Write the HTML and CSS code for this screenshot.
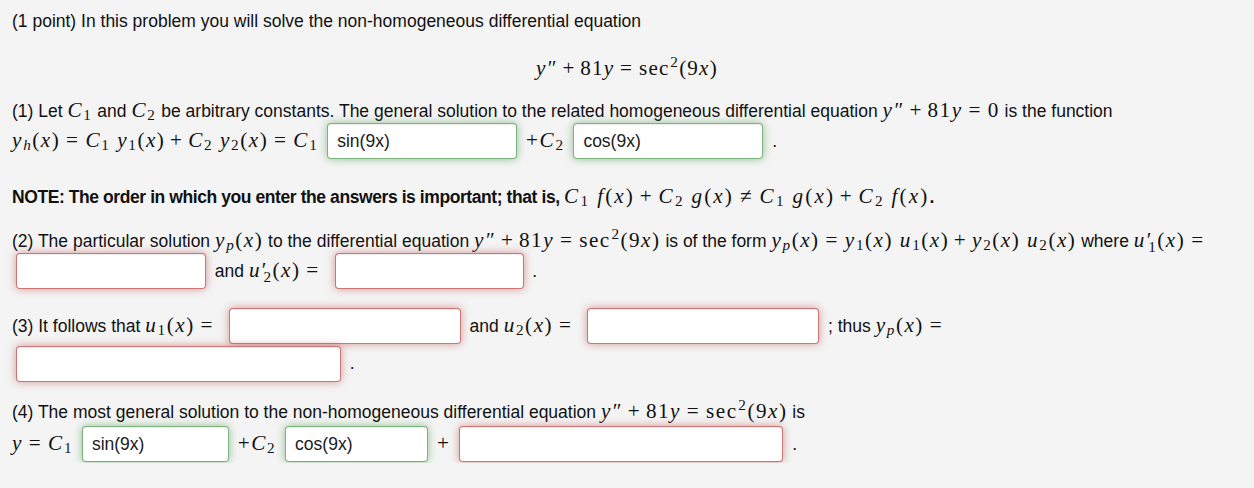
FILE: index.html
```html
<!DOCTYPE html>
<html>
<head>
<meta charset="utf-8">
<title>Differential equation</title>
<link rel="stylesheet" href="styles.css">
</head>
<body>
<div class="page">
  <p class="intro">(1 point) In this problem you will solve the non-homogeneous differential equation</p>
  <div class="display"><span class="k"><i>y</i><span class="pr">″</span><span class="bin">+</span>81<i>y</i><span class="rel">=</span>sec<sup>2</sup>(9<i>x</i>)</span></div>

  <div class="part p1">
    <div class="line">(1) Let <span class="k"><i>C</i><sub>1</sub></span> and <span class="k"><i>C</i><sub>2</sub></span> be arbitrary constants. The general solution to the related homogeneous differential equation <span class="k"><i>y</i><span class="pr">″</span><span class="bin">+</span>81<i>y</i><span class="rel">=</span>0</span> is the function</div>
    <div class="row"><span class="k"><i>y</i><sub><i>h</i></sub>(<i>x</i>)<span class="rel">=</span><i>C</i><sub>1</sub><span class="sp"></span><i>y</i><sub>1</sub>(<i>x</i>)<span class="bin">+</span><i>C</i><sub>2</sub><span class="sp"></span><i>y</i><sub>2</sub>(<i>x</i>)<span class="rel">=</span><i>C</i><sub>1</sub></span> <input class="ans correct w190" type="text" value="sin(9x)"> <span class="k">+<i>C</i><sub>2</sub></span> <input class="ans correct w190" type="text" value="cos(9x)"> .</div>
  </div>

  <p class="note">NOTE: The order in which you enter the answers is important; that is, <span class="k"><i>C</i><sub>1</sub><span class="sp"></span><i>f</i>(<i>x</i>)<span class="bin">+</span><i>C</i><sub>2</sub><span class="sp"></span><i>g</i>(<i>x</i>)<span class="rel">≠</span><i>C</i><sub>1</sub><span class="sp"></span><i>g</i>(<i>x</i>)<span class="bin">+</span><i>C</i><sub>2</sub><span class="sp"></span><i>f</i>(<i>x</i>)</span>.</p>

  <div class="part p2">
    <div class="line">(2) The particular solution <span class="k"><i>y</i><sub><i>p</i></sub>(<i>x</i>)</span> to the differential equation <span class="k"><i>y</i><span class="pr">″</span><span class="bin">+</span>81<i>y</i><span class="rel">=</span>sec<sup>2</sup>(9<i>x</i>)</span> is of the form <span class="k"><i>y</i><sub><i>p</i></sub>(<i>x</i>)<span class="rel">=</span><i>y</i><sub>1</sub>(<i>x</i>)<span class="sp"></span><i>u</i><sub>1</sub>(<i>x</i>)<span class="bin">+</span><i>y</i><sub>2</sub>(<i>x</i>)<span class="sp"></span><i>u</i><sub>2</sub>(<i>x</i>)</span> where <span class="k"><i>u</i><span class="pr1">′</span><sub class="under">1</sub>(<i>x</i>)<span class="rel">=</span></span></div>
    <div class="row"><input class="ans incorrect w190" type="text"> and <span class="k"><i>u</i><span class="pr1">′</span><sub class="under">2</sub>(<i>x</i>)<span class="rel">=</span></span> <input class="ans incorrect w189" type="text"> .</div>
  </div>

  <div class="part p3">
    <div class="row">(3) It follows that <span class="k"><i>u</i><sub>1</sub>(<i>x</i>)<span class="rel">=</span></span> <input class="ans incorrect w232" type="text"> and <span class="k"><i>u</i><sub>2</sub>(<i>x</i>)<span class="rel">=</span></span> <input class="ans incorrect w232" type="text"> ; thus <span class="k"><i>y</i><sub><i>p</i></sub>(<i>x</i>)<span class="rel">=</span></span></div>
    <div class="row"><input class="ans incorrect w325" type="text"> .</div>
  </div>

  <div class="part p4">
    <div class="line">(4) The most general solution to the non-homogeneous differential equation <span class="k"><i>y</i><span class="pr">″</span><span class="bin">+</span>81<i>y</i><span class="rel">=</span>sec<sup>2</sup>(9<i>x</i>)</span> is</div>
    <div class="row"><span class="k"><i>y</i><span class="rel">=</span><i>C</i><sub>1</sub></span> <input class="ans correct w147" type="text" value="sin(9x)"> <span class="k">+<i>C</i><sub>2</sub></span> <input class="ans correct w143" type="text" value="cos(9x)"> <span class="k">+</span> <input class="ans incorrect w324" type="text"> .</div>
  </div>
</div>
</body>
</html>
```

FILE: styles.css
```css
html, body {
  margin: 0;
  padding: 0;
}
body {
  background: #f4f4f4;
  font-family: "Liberation Sans", Arial, sans-serif;
  font-size: 17.5px;
  color: #111;
}
.page {
  padding: 9px 12px 0 12px;
}
p {
  margin: 0;
}
.intro {
  line-height: 24px;
}
.display {
  text-align: center;
  margin-top: 15px;
  height: 40px;
  line-height: 40px;
}
.display .k {
  letter-spacing: 0.055em;
}
.part {
  margin-top: 10px;
}
.note {
  margin-top: 24px;
  line-height: 24px;
  height: 24px;
  font-weight: bold;
  letter-spacing: -0.42px;
  white-space: nowrap;
}
.note .k {
  font-weight: normal;
  letter-spacing: 0.1em;
}
.p2 {
  margin-top: 20px;
}
.p3 {
  margin-top: 17px;
}
.p4 {
  margin-top: 16px;
}
.p4 .row {
  margin-top: 2px;
}
.line {
  line-height: 24px;
  height: 24px;
  white-space: nowrap;
}
.row {
  line-height: 36px;
  height: 38px;
  white-space: nowrap;
}
.ans {
  box-sizing: border-box;
  height: 36px;
  vertical-align: top;
  margin: 1px 4px;
  border-radius: 4px;
  background: #fff;
  font: 17.5px "Liberation Sans", Arial, sans-serif;
  padding: 0 9px;
  color: #1a1a1a;
  border: 1px solid;
  outline: none;
}
.correct {
  border-color: rgba(81, 153, 81, 0.75);
  box-shadow: inset 0 1px 1px rgba(0, 0, 0, 0.075), 0 0 8px rgba(81, 153, 81, 0.6);
}
.incorrect {
  border-color: rgba(191, 84, 84, 0.8);
  box-shadow: inset 0 1px 1px rgba(0, 0, 0, 0.075), 0 0 8px rgba(191, 84, 84, 0.6);
}
.w190 { width: 190px; }
.w189 { width: 189px; }
.w232 { width: 232px; }
.w325 { width: 325px; }
.w147 { width: 147px; }
.w143 { width: 143px; }
.w324 { width: 324px; }

.k {
  font-family: "Liberation Serif", "DejaVu Serif", serif;
  font-size: 1.21em;
  font-style: normal;
  letter-spacing: 0.07em;
  white-space: nowrap;
}
.k i {
  font-style: italic;
}
.k sub, .k sup {
  font-size: 0.72em;
  line-height: 0;
}
.k sub {
  vertical-align: -0.22em;
  margin-left: 0.02em;
}
.k sup {
  vertical-align: 0.5em;
  margin-left: 0.05em;
}
.pr {
  margin-left: 0.05em;
}
.pr1 {
  margin-left: 0.04em;
}
.k sub.under {
  margin-left: -0.3em;
  vertical-align: -0.3em;
}
.bin {
  padding: 0 0.222em;
}
.rel {
  padding: 0 0.278em;
}
.sp {
  display: inline-block;
  width: 0.32em;
}
```
